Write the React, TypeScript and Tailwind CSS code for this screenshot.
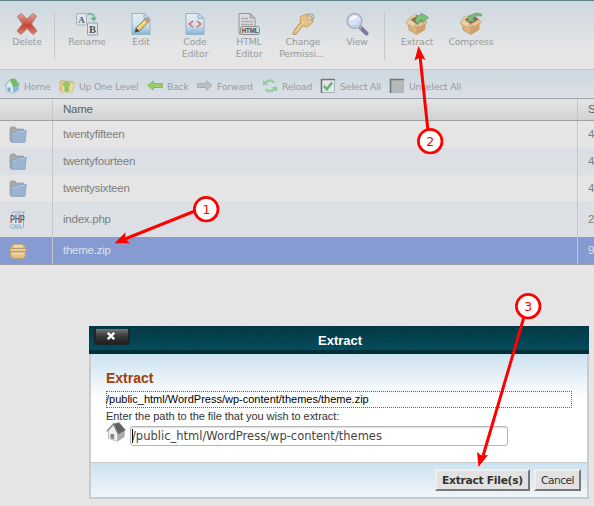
import type { ReactNode } from "react";

const ui = "font-['DejaVu_Sans',Verdana,sans-serif]";
const arial = "font-['Liberation_Sans',Arial,sans-serif]";

function DeleteIcon() {
  return (
    <svg width="22" height="24" viewBox="0 0 22 24">
      <defs>
        <linearGradient id="del" x1="0" y1="0" x2="0" y2="1">
          <stop offset="0" stopColor="#e0a69c" />
          <stop offset=".45" stopColor="#cf5a4d" />
          <stop offset=".55" stopColor="#c6453a" />
          <stop offset="1" stopColor="#dc8067" />
        </linearGradient>
      </defs>
      <path d="M1.500 4.500 5 1.500 11 7 17 1.500 20.500 4 15.500 12 21 19 17 22.500 11 16.500 5 22.500 1 19 6.500 12Z" fill="url(#del)" stroke="#b27870" strokeWidth="1" />
    </svg>
  );
}

function RenameIcon() {
  return (
    <svg width="22" height="24" viewBox="0 0 22 24">
      <rect x=".5" y="1.5" width="10" height="11.5" rx=".5" fill="#dfe6eb" stroke="#a8b2ba" />
      <rect x="11.5" y="11" width="10" height="12" rx=".5" fill="#e0e3e9" stroke="#979fa8" />
      <text x="5.5" y="10.5" textAnchor="middle" fontFamily="Liberation Serif, serif" fontWeight="bold" fontSize="9" fill="#535960">A</text>
      <text x="16.5" y="20.8" textAnchor="middle" fontFamily="Liberation Serif, serif" fontWeight="bold" fontSize="10.5" fill="#505355">B</text>
      <path d="M11.5 2.5C15.5.5 18.500 3 18 6" fill="none" stroke="#83b99e" strokeWidth="2" />
      <path d="m14 6 6.500-1-2 4.500Z" fill="#72b38f" />
    </svg>
  );
}

function Sheet({ children }: { children?: ReactNode }) {
  return (
    <svg width="20" height="24" viewBox="0 0 20 24">
      <defs>
        <linearGradient id="sheet" x1="0" y1="0" x2="0" y2="1">
          <stop offset="0" stopColor="#e5edf2" />
          <stop offset=".55" stopColor="#cfe2ef" />
          <stop offset="1" stopColor="#85b3d3" />
        </linearGradient>
      </defs>
      <path d="M1 1.500h12l6 5V22.500H1Z" fill="url(#sheet)" stroke="#93b4c9" />
      <path d="M13 1.500v5h6Z" fill="#c5dbe6" stroke="#93b4c9" />
      {children}
    </svg>
  );
}

function EditIcon() {
  return (
    <Sheet>
      <path d="m5 16 8.500-8.500 3.500 3L8.500 19 4 20Z" fill="#e5cf72" stroke="#7e7e72" strokeWidth="1" />
      <path d="m13.500 7.500 2-2 3.500 3-2 2Z" fill="#d5a191" stroke="#97766c" strokeWidth=".6" />
      <path d="m4 20.500 1-4.500 3.500 3Z" fill="#444" />
      <path d="m6.500 16 8.200-7" stroke="#fff1b6" strokeWidth=".8" />
    </Sheet>
  );
}

function CodeIcon() {
  return (
    <Sheet>
      <path d="M8 9 4.300 12 8 15M12 9l3.700 3L12 15" fill="none" stroke="#de6163" strokeWidth="1.5" />
    </Sheet>
  );
}

function HtmlIcon() {
  return (
    <svg width="22" height="24" viewBox="0 0 22 24">
      <path d="M1 1.500h11l5 4.500V22H1Z" fill="#ddd" stroke="#8e9294" />
      <path d="M12 1.500V6h5Z" fill="#bfc3c4" stroke="#999" />
      <path d="M3 6.500h7M3 9.500h12M3 12.500h12" stroke="#aaaeb0" strokeWidth="1.4" />
      <rect x="2.500" y="14.500" width="19" height="8" rx="2" fill="#ddd" stroke="#8d8d8d" />
      <text x="12" y="21.100" textAnchor="middle" textLength="16.5" lengthAdjust="spacingAndGlyphs" fontFamily="Liberation Sans, sans-serif" fontWeight="bold" fontSize="7.2" fill="#444">HTML</text>
    </svg>
  );
}

function KeyIcon() {
  return (
    <svg width="24" height="24" viewBox="0 0 24 24">
      <path d="M12.500 12.500 5 22.500H2V20L3.500 18.500 3.700 16.800 5.600 16.200 6.200 14.200 10.200 9.500" fill="#e3bd75" stroke="#bd965d" />
      <path d="M9.500 4.500 16 2l5 3 1 5-5.500 5L11 13.500 9 9Z" fill="#e6c184" stroke="#c6a066" />
      <path d="m4.500 20 9-11" stroke="#f4dda8" />
      <circle cx="19.500" cy="5" r="3.200" fill="none" stroke="#a4abad" strokeWidth="1.3" />
      <circle cx="18" cy="6.500" r="1.200" fill="#cfd9de" />
    </svg>
  );
}

function ViewIcon() {
  return (
    <svg width="24" height="24" viewBox="0 0 24 24">
      <path d="m15.500 15.500 6 6" stroke="#8178a0" strokeWidth="4" strokeLinecap="round" />
      <path d="m13.500 13.500 3 3" stroke="#aaa8b8" strokeWidth="2.5" />
      <circle cx="9.500" cy="9" r="7.300" fill="#d5e3f4" stroke="#adb1c2" strokeWidth="1.8" />
      <path d="M5 9C4 5 9 2.500 12 4c1 3-3 3-7 5" fill="#f2f6fb" />
      <path d="M7 13.500c3 1 6-.5 7-4" fill="none" stroke="#bccdeb" strokeWidth="1.7" />
    </svg>
  );
}

function BoxIcon({ inward = false }: { inward?: boolean }) {
  return (
    <svg width="24" height="24" viewBox="0 0 24 24">
      <path d="m4 5.500 7-3L20 7l-8.500 6Z" fill="#80694e" />
      <path d="m3.500 11 8 4 8.500-5v7.500L11.500 22.500 4 18Z" fill="#ddb47a" stroke="#b38e61" strokeWidth=".7" />
      <path d="m11.500 15v7.500L20 17.500V10Z" fill="#cda26c" />
      <path d="m4 6.500-3 5 7.500 4 3-3.500Z" fill="#e9cfa2" stroke="#bf9968" strokeWidth=".7" />
      <path d="m20 7.500 2 3-7 5-3.500-3.500Z" fill="#e5c28b" stroke="#bb9463" strokeWidth=".7" />
      <path d="m3.500 6 6.500-3.500 2 1.500-6 3.500Z" fill="#e5c796" />
      {inward ? (
        <path d="M22.500 2c-5-1.500-9-.5-11 2.500L9 4.200 9.300 10l6.500-1.500-2-2C15.500 4 18 3.500 22.500 4Z" fill="#7ebc7c" stroke="#689b6c" strokeWidth=".8" />
      ) : (
        <path d="M10.500 10C10 5.500 12 3.500 16 3.500V1l7.500 4.500-6 5.500V8c-2-.2-3 1-4 3.500Z" fill="#7bc177" stroke="#689b6c" strokeWidth=".8" />
      )}
    </svg>
  );
}

function HomeIcon({ gray = false, size = 16 }: { gray?: boolean; size?: number }) {
  return (
    <svg width={size} height={size} viewBox="0 0 16 16">
      <path d="M2 7 6 2.500l8.500 4v5L9 15.500 2 13Z" fill={gray ? "#f1f1f1" : "#e1ebf4"} stroke={gray ? "#aaa" : "#91afc5"} strokeWidth=".6" />
      <path d="M9 9.500 14.700 7V12L9 15.300Z" fill={gray ? "#ababab" : "#91bbdc"} />
      <path d="m6 1.500 4.500-1 5 6L9.500 9.500Z" fill={gray ? "#626262" : "#70b96e"} stroke={gray ? "#6c6c6c" : "#83b383"} strokeWidth=".5" />
      <path d="M.5 7.500 6 1.500 9.500 9" fill="none" stroke={gray ? "#858585" : "#97c696"} strokeWidth="1" />
      <path d="M3.500 9.500h3V14l-3-1.200Z" fill={gray ? "#888" : "#6fabd8"} />
    </svg>
  );
}

function UpIcon() {
  return (
    <svg width="16" height="16" viewBox="0 0 16 16">
      <path d="M1 13V3.500L5 2l1.500 1.500L13.500 3v10Z" fill="#e3cb86" stroke="#c4ad72" strokeWidth=".7" />
      <path d="m2 14.500 1-8.500L15.500 4.500 13.500 14Z" fill="#ead9a1" stroke="#cdbb80" strokeWidth=".7" />
      <path d="m7.500 3 3.500 4H9.300v6H6V7H4Z" fill="#91cb67" stroke="#73ae58" strokeWidth=".7" />
    </svg>
  );
}

function ArrowIcon({ right = false }: { right?: boolean }) {
  return (
    <svg width="16" height="16" viewBox="0 0 16 16">
      <path
        d={right ? "M15 7.500 9.500 3v2.500h-9v4h9V12Z" : "M.7 7.500 6.300 3v2.500h9v4h-9V12Z"}
        fill={right ? "#bec1c3" : "#99cf67"}
        stroke={right ? "#a7aaac" : "#7fb65a"}
        strokeWidth=".9"
      />
    </svg>
  );
}

function ReloadIcon() {
  return (
    <svg width="16" height="16" viewBox="0 0 16 16">
      <path d="M3.500 5C6 1.800 9 1.800 12 4.500M12.800 10.500C10 14.200 6 13.700 3.500 11.500" fill="none" stroke="#98ce9e" strokeWidth="2.5" />
      <path d="M1 2v5.500l5.500-1ZM15 13.500V8.300L9.500 9.500Z" fill="#91cb98" />
    </svg>
  );
}

function Check({ on = false }: { on?: boolean }) {
  return (
    <svg width="16" height="16" viewBox="0 0 16 16">
      <path d="M1.500 1.500h13v13h-13Z" fill={on ? "#e2e6e8" : "#b7babc"} stroke="#a5b4bd" />
      <path d="M1.500 15V1.500H15" fill="none" stroke="#707577" strokeWidth="1.6" />
      {on && <path d="m4 8 2.800 3.300L12 4.500" fill="none" stroke="#62b272" strokeWidth="2.3" />}
    </svg>
  );
}

function FolderIcon() {
  return (
    <svg width="20" height="18" viewBox="0 0 20 18">
      <path d="M2 15V2.500L3 1h4l1.300 2h7.200v13H3Z" fill="#a5a7a9" stroke="#9b9fa3" strokeWidth=".8" />
      <path d="m4 7 4-.5 2-2h8.300L17 16.300H3.500Z" fill="#9ab4d2" stroke="#89a3c0" strokeWidth=".8" />
      <path d="m5 8 4-.5 2-2h6" fill="none" stroke="#b3c7de" />
    </svg>
  );
}

function PhpIcon() {
  return (
    <svg width="20" height="18" viewBox="0 0 20 18">
      <path d="M4 3.500C4 1 6 1 7 1h9.500c-1.500 1-1 3-1 5v9c0 2-2 2-3 2H3.500c-2 0-2-3 0-3H5" fill="#dce7ef" stroke="#8eabc5" />
      <path d="M5 14h8c-1.500 1-.5 3 0 3M7 3h6M6 15.500h5" fill="none" stroke="#9bb5ca" />
      <text x="9.200" y="11.800" textAnchor="middle" textLength="14.5" lengthAdjust="spacingAndGlyphs" fontFamily="Liberation Sans, sans-serif" fontSize="10" fontWeight="bold" fill="#566476">PHP</text>
    </svg>
  );
}

function ZipIcon() {
  return (
    <svg width="20" height="18" viewBox="0 0 20 18">
      <path d="M2.500 8h15v6l-2 2.500H5L2.500 14Z" fill="#e0bf84" stroke="#bc9d6b" strokeWidth=".8" />
      <path d="M5 2h10l3 4.500H2.500Z" fill="#d9b981" stroke="#b99d70" strokeWidth=".7" />
      <path d="M6.500 3h7.500l1.500 2.500H5Z" fill="#f0dbae" />
      <path d="M2.500 6.500h15l1.800 2.800H.7Z" fill="#ecd29d" stroke="#a9905f" strokeWidth=".8" />
      <path d="M4 12h12" stroke="#f0dbad" strokeWidth="1.5" />
    </svg>
  );
}

function Tool({ icon, children }: { icon: ReactNode; children: ReactNode }) {
  return (
    <div className="flex w-[54px] flex-col items-center pt-[11px] text-center text-[9.35px] leading-3 tracking-[-0.17px] text-[#999c9e]">
      <div className="flex h-6 items-center">{icon}</div>
      <div className="whitespace-nowrap">{children}</div>
    </div>
  );
}

const Separator = () => <div className="mr-[5px] mt-[11px] h-12 w-px bg-[#c5c7c8]" />;

function NavItem({ icon, label, width }: { icon: ReactNode; label: string; width: string }) {
  return (
    <div className={`flex shrink-0 items-center gap-1 ${width}`}>
      {icon}
      <span className="whitespace-nowrap pt-[3px]">{label}</span>
    </div>
  );
}

const rows = [
  { name: "twentyfifteen", size: "4", icon: <FolderIcon />, cls: "h-[27px] bg-[#e5e5e5] text-[#7d7f81]" },
  { name: "twentyfourteen", size: "4", icon: <FolderIcon />, cls: "h-[27px] bg-[#dce0e5] text-[#7d7f81]" },
  { name: "twentysixteen", size: "4", icon: <FolderIcon />, cls: "h-[27px] bg-[#e5e5e5] text-[#7d7f81]" },
  { name: "index.php", size: "2", icon: <PhpIcon />, cls: "h-[35px] bg-[#dce0e5] text-[#7d7f81]" },
  { name: "theme.zip", size: "9", icon: <ZipIcon />, cls: "h-[27px] bg-[#869bd1] text-[#dde2ee]" },
];

function ExtractDialog() {
  return (
    <section className="absolute left-[89px] top-[326px] flex h-[173px] w-[500px] flex-col">
      <header className="flex h-7 border-b-4 border-[#002f3a] bg-[repeating-linear-gradient(135deg,#ffffff08_0px,#ffffff08_1px,transparent_1px,transparent_3px),linear-gradient(#003641,#024a5b)]">
        <button className="ml-[5px] mt-[3px] flex h-4 w-9 items-center justify-center rounded-b-[4px] border-2 border-t-0 border-[#202426] bg-linear-to-b from-[#777] via-[#3c3c3c] to-[#202020]" aria-label="Close">
          <svg className="mr-[2px]" width="8" height="8" viewBox="0 0 8 8"><path d="m.8.8 6.400 6.400M7.200.8.8 7.200" stroke="white" strokeWidth="2.3" /></svg>
        </button>
        <h2 className={`${arial} ml-[188px] pt-[6px] text-[13px] font-bold leading-[17px] text-white`}>Extract</h2>
      </header>
      <div className={`${arial} flex h-[108px] flex-col border-x-2 border-[#c9cccf] bg-[linear-gradient(#cce2f0_0px,#fff_45px)] pl-[15px] pt-4`}>
        <h3 className="h-[21px] text-[14px] font-bold leading-4 text-[#a33f0f]">Extract</h3>
        <div className="h-[17px] w-[466px] border border-dotted border-[#666] text-[11px] leading-[15px] text-black"><span className="-ml-px">/public_html/WordPress/wp-content/themes/theme.zip</span></div>
        <div className="h-[14px] text-[11px] leading-[16px] tracking-[-0.04px] text-[#333]">Enter the path to the file that you wish to extract:</div>
        <div className="flex">
          <div className="w-6"><HomeIcon gray size={20} /></div>
          <div className={`${ui} mt-1 flex h-5 w-[378px] items-center rounded-[3px] border border-[#b5b7b9] bg-white text-[11.5px] text-[#454545] shadow-[inset_0_1px_1px_#ddd]`}>
            <span className="ml-px h-[14px] w-px bg-black" />
            <span className="-ml-px pt-px">/public_html/WordPress/wp-content/themes</span>
          </div>
        </div>
      </div>
      <footer className={`${ui} flex h-[37px] justify-end gap-1 border-2 border-t border-[#c9cccf] bg-linear-to-b from-[#cce2f0] to-[#eff6f9] pr-[6px] pt-[6px] text-[#333]`}>
        <button className="h-[22px] w-[95px] whitespace-nowrap border-2 border-b-[#777] border-l-[#eee] border-r-[#777] border-t-[#eee] bg-[#e2e2e2] text-[10.7px] font-bold leading-[19px] tracking-[-0.27px]">Extract File(s)</button>
        <button className="h-[22px] w-[47px] whitespace-nowrap border-2 border-b-[#777] border-l-[#eee] border-r-[#777] border-t-[#eee] bg-[#e2e2e2] text-[10.7px] leading-[19px] tracking-[-0.55px]">Cancel</button>
      </footer>
    </section>
  );
}

function Annotations() {
  return (
    <svg className="absolute left-0 top-0" width="594" height="506" viewBox="0 0 594 506">
      <g stroke="#f00" strokeWidth="3" fill="#f00">
        <path d="M195 211 125 239" />
        <path d="M428 131 420 56" />
        <path d="M524 317 483 456" />
      </g>
      <g fill="#f00">
        <path d="m114.500 243.300 11-11-.3 6.500 4.800 4.500Z" />
        <path d="m418.500 46 7 14-5.500-2.500-5.500 3Z" />
        <path d="m478.500 467-1.500-15 4.500 3.500 6.500-.5Z" />
      </g>
      <g stroke="#f00" strokeWidth="2.7" fill="#fff">
        <circle cx="206.200" cy="209.200" r="11.800" />
        <circle cx="430.200" cy="141.200" r="11.800" />
        <circle cx="528.200" cy="306.200" r="11.800" />
      </g>
      <g fill="#f00" fontFamily="DejaVu Sans, sans-serif" fontSize="12.5" textAnchor="middle">
        <text x="206.500" y="214">1</text>
        <text x="430.200" y="146">2</text>
        <text x="528.200" y="311">3</text>
      </g>
    </svg>
  );
}

export default function App() {
  return (
    <main className={`${ui} relative h-[506px] w-[594px] overflow-hidden bg-[#e5e5e5]`}>
      <div className="flex h-[70px] border-b border-t border-b-[#c2c6c9] border-t-[#637f88] bg-linear-to-b from-[#ccd8e0] to-[#e5e5e5] to-70%">
        <Tool icon={<DeleteIcon />}>Delete</Tool>
        <Separator />
        <Tool icon={<RenameIcon />}>Rename</Tool>
        <Tool icon={<EditIcon />}>Edit</Tool>
        <Tool icon={<CodeIcon />}>Code<br />Editor</Tool>
        <Tool icon={<HtmlIcon />}>HTML<br />Editor</Tool>
        <Tool icon={<KeyIcon />}>Change<br /><span className="mr-[3px] tracking-[-0.27px]">Permissi...</span></Tool>
        <Tool icon={<ViewIcon />}>View</Tool>
        <Separator />
        <Tool icon={<BoxIcon />}>Extract</Tool>
        <Tool icon={<BoxIcon inward />}>Compress</Tool>
      </div>
      <nav className="flex h-7 items-center bg-linear-to-b from-[#cdd8e0] to-[#dbe0e5] pl-1 pt-[3px] text-[9.3px] leading-3 tracking-[-0.23px] text-[#999c9e]">
        <NavItem icon={<HomeIcon />} label="Home" width="w-[55px]" />
        <NavItem icon={<UpIcon />} label="Up One Level" width="w-[88px]" />
        <NavItem icon={<ArrowIcon />} label="Back" width="w-[50px]" />
        <NavItem icon={<ArrowIcon right />} label="Forward" width="w-[65px]" />
        <NavItem icon={<ReloadIcon />} label="Reload" width="w-[58px]" />
        <NavItem icon={<Check on />} label="Select All" width="w-[69px]" />
        <NavItem icon={<Check />} label="Unselect All" width="w-[90px]" />
      </nav>
      <div className={`${arial} border-b border-[#a0a3a5] text-[11.5px] tracking-[-0.24px]`}>
        <div className="flex h-[23px] border-b border-t border-[#a0a3a5] bg-linear-to-b from-[#e4e5e5] to-[#d1d3d2] leading-[21px] text-[#5e6062]">
          <div className="w-[53px] shrink-0 border-r border-[#c4c7c9]" />
          <div className="w-[525px] shrink-0 border-r border-[#c4c7c9] pl-[10px]">Name</div>
          <div className="shrink-0 pl-[10px]">S</div>
        </div>
        {rows.map((row) => (
          <div key={row.name} className={`flex ${row.cls}`}>
            <div className="flex w-[53px] shrink-0 items-center border-r border-[#c4c7c9] pl-2">{row.icon}</div>
            <div className="flex w-[525px] shrink-0 items-center border-r border-[#c4c7c9] pl-[10px]">{row.name}</div>
            <div className="flex shrink-0 items-center pl-[10px]">{row.size}</div>
          </div>
        ))}
      </div>
      <ExtractDialog />
      <Annotations />
    </main>
  );
}
